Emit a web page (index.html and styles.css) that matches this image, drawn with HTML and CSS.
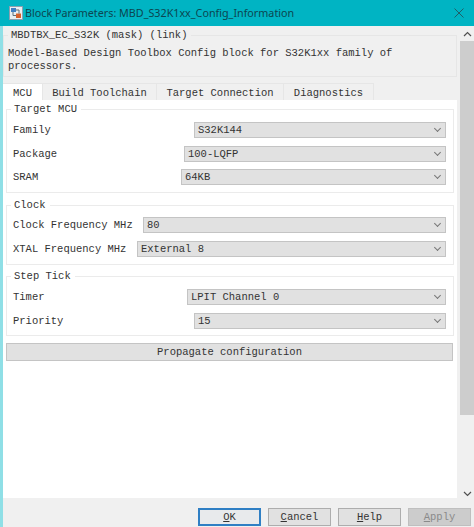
FILE: index.html
```html
<!DOCTYPE html>
<html lang="en">
<head>
  <meta charset="UTF-8" />
  <title>Block Parameters: MBD_S32K1xx_Config_Information</title>
  <link rel="stylesheet" href="styles.css">
</head>
<body>
  <header class="title-bar">
    <svg class="title-icon" width="14" height="14" viewBox="0 0 14 14">
      <rect x="0.5" y="0.5" width="13" height="13" fill="#e8eef2" stroke="#8aa0b0"/>
      <rect x="2" y="2" width="5" height="4" fill="#3f7fc4"/>
      <rect x="7" y="7.5" width="5" height="4.5" fill="#d9602a"/>
      <path d="M7 4h3v3.5M7 9.5H4V6" fill="none" stroke="#5f6f7a" stroke-width="1"/>
    </svg>
    <span class="title-text">Block Parameters: MBD_S32K1xx_Config_Information</span>
    <svg class="title-close" width="10" height="10" viewBox="0 0 10 10">
      <path d="M0.5 0.5l9 9M9.5 0.5l-9 9" stroke="#1f5f68" stroke-width="1" fill="none"/>
    </svg>
  </header>

  <div class="window-body">
    <main class="content">
      <fieldset class="group group-desc">
        <legend>MBDTBX_EC_S32K (mask) (link)</legend>
        <p>Model-Based Design Toolbox Config block for S32K1xx family of processors.</p>
      </fieldset>

      <div class="tabs">
        <div class="tab active">MCU</div>
        <div class="tab tab-build">Build Toolchain</div>
        <div class="tab tab-target">Target Connection</div>
        <div class="tab tab-diag">Diagnostics</div>
      </div>

      <div class="tab-panel">
        <fieldset class="group group-mcu">
          <legend>Target MCU</legend>
          <div class="row">
            <label class="label-family">Family</label>
            <div class="select">S32K144</div>
          </div>
          <div class="row row-package">
            <label class="label-package">Package</label>
            <div class="select">100-LQFP</div>
          </div>
          <div class="row">
            <label class="label-sram">SRAM</label>
            <div class="select">64KB</div>
          </div>
        </fieldset>

        <fieldset class="group group-clock">
          <legend>Clock</legend>
          <div class="row">
            <label class="label-clock">Clock Frequency MHz</label>
            <div class="select">80</div>
          </div>
          <div class="row">
            <label class="label-xtal">XTAL Frequency MHz</label>
            <div class="select">External 8</div>
          </div>
        </fieldset>

        <fieldset class="group group-tick">
          <legend>Step Tick</legend>
          <div class="row">
            <label class="label-timer">Timer</label>
            <div class="select">LPIT Channel 0</div>
          </div>
          <div class="row">
            <label class="label-family">Priority</label>
            <div class="select">15</div>
          </div>
        </fieldset>

        <button class="propagate">Propagate configuration</button>
      </div>
    </main>

    <div class="scrollbar">
      <svg class="scroll-arrow" width="9" height="6" viewBox="0 0 9 6">
        <path d="M1 5l3.5-3.5L8 5" fill="none" stroke="#505050" stroke-width="1.2"/>
      </svg>
      <div class="scroll-thumb"></div>
      <svg class="scroll-arrow scroll-arrow-down" width="9" height="6" viewBox="0 0 9 6">
        <path d="M1 1l3.5 3.5L8 1" fill="none" stroke="#505050" stroke-width="1.2"/>
      </svg>
    </div>
  </div>

  <footer class="button-bar">
    <button class="btn btn-default"><u>O</u>K</button>
    <button class="btn"><u>C</u>ancel</button>
    <button class="btn"><u>H</u>elp</button>
    <button class="btn btn-disabled"><u>A</u>pply</button>
  </footer>
</body>
</html>
```

FILE: styles.css
```css
html, body {
  margin: 0;
  padding: 0;
  height: 100%;
}

body {
  width: 474px;
  height: 527px;
  overflow: hidden;
  display: flex;
  flex-direction: column;
  box-sizing: border-box;
  background-color: #f0f0f0;
  font-family: 'Liberation Mono', monospace;
  font-size: 10.5px;
  color: #333;
}

.title-bar {
  flex: none;
  height: 26px;
  display: flex;
  align-items: center;
  padding: 0 10px 0 9px;
  background-color: #00b4c3;
}

.title-icon {
  flex: none;
  margin-right: 2px;
}

.title-text {
  flex: 1;
  font-family: 'Noto Sans', sans-serif;
  font-size: 10.75px;
  color: #0c4650;
}

.title-close {
  flex: none;
  margin-right: 0;
}

.window-body {
  flex: none;
  height: 474px;
  display: flex;
  border-left: 3px solid #8fdfe6;
  background-color: #f0f0f0;
}

.content {
  width: 454px;
  padding-top: 3px;
}

.group {
  margin: 0;
  padding: 0;
  border: 1px solid #e6e6e6;
  min-width: 0;
}

.group legend {
  margin-left: 0;
  padding: 0 4px 0 3px;
  line-height: 13px;
}

.group-desc {
  height: 41px;
  padding: 5px 4px 0 4px;
  box-sizing: content-box;
}

.group-desc p {
  margin: 0;
  line-height: 13px;
}

.tabs {
  display: flex;
  height: 17px;
  margin-top: 6px;
}

.tab {
  width: 40px;
  box-sizing: border-box;
  text-align: center;
  line-height: 18px;
  background-color: #f0f0f0;
  border: 1px solid #e6e6e6;
  border-bottom: none;
  border-left: none;
}

.tab.active {
  background-color: #ffffff;
}

.tab-build {
  width: 114px;
}

.tab-target {
  width: 127px;
}

.tab-diag {
  width: 90px;
}

.tab-panel {
  height: 398px;
  padding: 3px 3px 0;
  box-sizing: border-box;
  background-color: #ffffff;
}

.tab-panel .group {
  padding: 0 7px 5px 4px;
  border-color: #ebebeb;
}

.tab-panel .group-mcu {
  padding-bottom: 7px;
  margin-bottom: 6px;
}

.tab-panel .group-clock {
  padding-bottom: 7px;
  margin-bottom: 5px;
}

.tab-panel .group-tick {
  padding-bottom: 6px;
}

.row {
  display: flex;
  align-items: center;
  height: 16px;
  margin-top: 7px;
}

.group legend + .row {
  margin-top: 6px;
}

.group .row-package {
  margin-top: 8px;
}

.group-clock .row {
  margin-top: 8px;
}

.group-clock legend + .row {
  margin-top: 5px;
}

.group-tick .row {
  margin-top: 8px;
}

.row label {
  flex: none;
  padding-left: 2px;
  box-sizing: border-box;
}

.label-family {
  width: 183px;
}

.label-package {
  width: 173px;
}

.label-sram {
  width: 170px;
}

.label-clock {
  width: 132px;
}

.label-xtal {
  width: 126px;
}

.label-timer {
  width: 176px;
}

.select {
  flex: 1;
  height: 16px;
  box-sizing: border-box;
  padding-left: 3px;
  line-height: 15px;
  background-color: #e1e1e1;
  border: 1px solid #c4c4c4;
  position: relative;
}

/* chevron at right end of the combo box */
.select::after {
  content: "";
  position: absolute;
  right: 5px;
  top: 3px;
  width: 4px;
  height: 4px;
  border-right: 1px solid #777;
  border-bottom: 1px solid #777;
  transform: rotate(45deg);
}

.propagate {
  display: block;
  width: 447px;
  height: 18px;
  margin-top: 7px;
  padding: 0;
  font: inherit;
  color: #333;
  background-color: #e1e1e1;
  border: 1px solid #c4c4c4;
}

.scrollbar {
  flex: none;
  width: 14px;
  margin-left: 3px;
  display: flex;
  flex-direction: column;
  align-items: center;
  padding: 5px 0 3px;
  box-sizing: border-box;
  background-color: #f0f0f0;
}

.scroll-arrow {
  flex: none;
}

.scroll-arrow-down {
  margin-top: auto;
}

.scroll-thumb {
  width: 100%;
  height: 374px;
  margin-top: 4px;
  background-color: #cdcdcd;
}

.button-bar {
  flex: none;
  height: 27px;
  display: flex;
  justify-content: flex-end;
  gap: 7px;
  padding: 8px 3px 1px 0;
  box-sizing: border-box;
  border-left: 3px solid #8fdfe6;
}

.btn {
  width: 63px;
  height: 18px;
  padding: 0;
  font: inherit;
  color: #333;
  background-color: #e1e1e1;
  border: 1px solid #adadad;
}

.btn-default {
  background-color: #e8eaec;
  border: 2px solid #2f7fc4;
}

.btn-disabled {
  color: #8a8a8a;
  background-color: #cccccc;
  border-color: #bfbfbf;
}
```
